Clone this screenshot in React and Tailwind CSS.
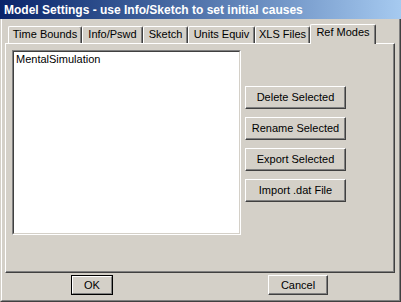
import React from "react";

const font = { fontFamily: '"Liberation Sans", Arial, sans-serif' };

function Tab({ label, w, selected }) {
  if (selected) {
    return (
      <div
        className={`relative z-10 -mb-px h-[20px] ${w} shrink-0 rounded-t-[2px] border-l border-t border-r border-l-white border-t-white border-r-[#404040] bg-[#d4d0c8] shadow-[inset_-1px_0_#808080] pt-[1px] text-center text-[11px] leading-[13px] text-black`}
      >
        {label}
      </div>
    );
  }
  return (
    <div
      className={`h-[17px] ${w} shrink-0 rounded-t-[2px] border-l border-t border-r border-l-white border-t-white border-r-[#404040] bg-[#d4d0c8] shadow-[inset_-1px_0_#808080] pt-[1px] text-center text-[11px] leading-[13px] text-black`}
    >
      {label}
    </div>
  );
}

function Btn({ children }) {
  return (
    <div className="flex h-[23px] w-[101px] items-center justify-center border-l border-t border-r border-b border-l-white border-t-white border-r-[#404040] border-b-[#404040] bg-[#d4d0c8] shadow-[inset_-1px_-1px_#808080] text-[11px] leading-[13px] text-black">
      {children}
    </div>
  );
}

export default function App() {
  return (
    <div className="h-[302px] w-[401px] overflow-hidden bg-[#d4d0c8]" style={font}>
      <div className="h-[19px] w-full bg-gradient-to-r from-[#0a246a] to-[#a6caf0] pl-[4px] pt-[3px] text-[12px] font-bold leading-[15px] text-white whitespace-nowrap">
        Model Settings - use Info/Sketch to set initial causes
      </div>
      <div className="h-[283px] w-[401px] border-l border-r border-b border-l-[#d4d0c8] border-r-[#404040] border-b-[#404040]">
        <div className="h-[282px] w-[399px] border-l border-r border-b border-l-white border-r-[#808080] border-b-[#808080]">
          <div className="flex h-[24px] items-end pl-[6px]">
            <Tab label="Time Bounds" w="w-[74px]" />
            <Tab label="Info/Pswd" w="w-[61px]" />
            <Tab label="Sketch" w="w-[45px]" />
            <Tab label="Units Equiv" w="w-[67px]" />
            <Tab label="XLS Files" w="w-[55px]" />
            <Tab label="Ref Modes" w="w-[66px]" selected />
          </div>
          <div className="ml-[3px] h-[230px] w-[390px] border-l border-t border-r border-b border-l-white border-t-white border-r-[#404040] border-b-[#404040] shadow-[inset_-1px_-1px_#808080]">
            <div className="flex items-start pl-[6px] pt-[6px]">
              <div className="h-[185px] w-[229px] border-l border-t border-r border-b border-l-[#808080] border-t-[#808080] border-r-white border-b-white">
                <div className="h-full w-full border-l border-t border-r border-b border-l-[#404040] border-t-[#404040] border-r-[#d4d0c8] border-b-[#d4d0c8] bg-white pl-[2px] pt-[1px] text-[11px] leading-[13px] text-black">
                  MentalSimulation
                </div>
              </div>
              <div className="ml-[4px] mt-[36px] flex flex-col gap-[8px]">
                <Btn>Delete Selected</Btn>
                <Btn>Rename Selected</Btn>
                <Btn>Export Selected</Btn>
                <Btn>Import .dat File</Btn>
              </div>
            </div>
          </div>
          <div className="mt-[2px] flex items-start pl-[69px]">
            <div className="h-[20px] w-[42px] border border-black">
              <div className="flex h-full w-full items-center justify-center border-l border-t border-r border-b border-l-white border-t-white border-r-[#808080] border-b-[#808080] text-[11px] leading-[13px] text-black">
                OK
              </div>
            </div>
            <div className="ml-[155px] flex h-[20px] w-[60px] items-center justify-center border-l border-t border-r border-b border-l-white border-t-white border-r-[#404040] border-b-[#404040] shadow-[inset_-1px_-1px_#808080] text-[11px] leading-[13px] text-black">
              Cancel
            </div>
          </div>
        </div>
      </div>
    </div>
  );
}
